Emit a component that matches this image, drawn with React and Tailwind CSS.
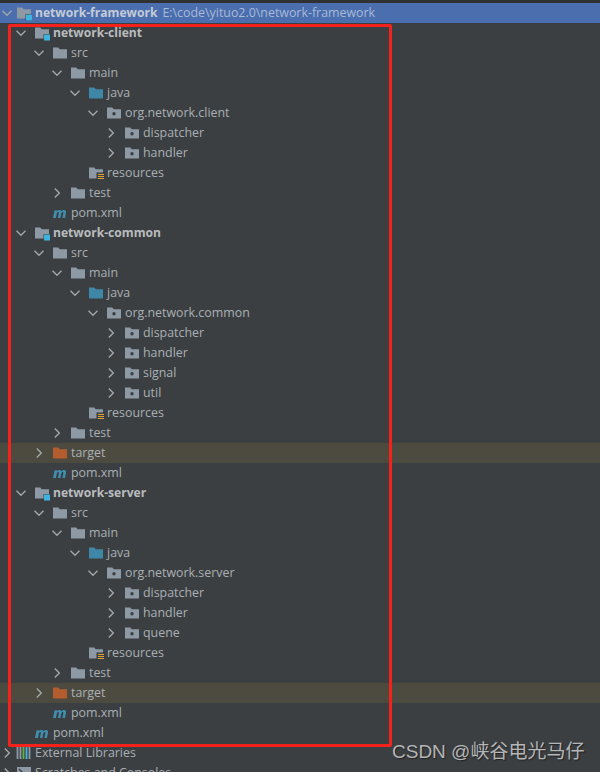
const INDENT = {
  0: 'pl-[1px]',
  1: 'pl-[15px]',
  2: 'pl-[33px]',
  3: 'pl-[51px]',
  4: 'pl-[69px]',
  5: 'pl-[87px]',
  6: 'pl-[105px]',
}

const FOLDER = 'M1 2.5h5.2l1.5 1.7H15v9.3H1z'

function Chevron({ dir, tight }) {
  const gap = tight ? 'mr-[3px]' : 'mr-[7px]'
  if (!dir) return <span className={`w-[12px] shrink-0 ${gap}`} />
  return (
    <svg width="12" height="12" viewBox="0 0 12 12" className={`shrink-0 text-[#a3a7aa] ${gap}`} fill="none" stroke="currentColor" strokeWidth="1.4">
      {dir === 'down' ? <path d="M1.5 3.8 6 8.3l4.5-4.5" /> : <path d="M3.8 1.5 8.3 6l-4.5 4.5" />}
    </svg>
  )
}

function Icon({ type }) {
  if (type === 'pom') {
    return (
      <svg width="16" height="16" viewBox="0 0 16 16" className="shrink-0">
        <path d="M1 13 2.6 5.2h2.5l-.2 1c.8-.8 1.6-1.2 2.5-1.2 1 0 1.6.4 1.9 1.3.9-.9 1.800-1.300 2.800-1.300 1.500 0 2.200.9 1.900 2.500L13 13h-2.600l1-5c.1-.6-.1-.9-.6-.9-.5 0-1 .3-1.400.8L8.400 13H5.900l1-5c.1-.6-.1-.9-.6-.9-.5 0-1 .3-1.400.8L3.900 13z" fill="#3f8eae" />
      </svg>
    )
  }
  if (type === 'module') {
    return (
      <svg width="16" height="16" viewBox="0 0 16 16" className="shrink-0">
        <path d={FOLDER} fill="#8d9aa5" />
        <rect x="9.500" y="9" width="6.500" height="6.500" fill="#3c3f41" />
        <rect x="10" y="9.500" width="6" height="6" fill="#3fb3e0" />
      </svg>
    )
  }
  if (type === 'package') {
    return (
      <svg width="16" height="16" viewBox="0 0 16 16" className="shrink-0">
        <path d={FOLDER} fill="#8d9aa5" />
        <circle cx="8" cy="8.800" r="1.700" fill="#3c3f41" />
      </svg>
    )
  }
  if (type === 'resources') {
    return (
      <svg width="16" height="16" viewBox="0 0 16 16" className="shrink-0">
        <path d={FOLDER} fill="#8d9aa5" />
        <rect x="8.500" y="7.500" width="7.500" height="8.500" fill="#3c3f41" />
        <path d="M10 9.500h6M10 11.500h6M10 13.500h6" stroke="#e3a33a" strokeWidth="1" />
      </svg>
    )
  }
  const fill = type === 'java' ? '#3f87a6' : type === 'target' ? '#b45c2e' : '#8d9aa5'
  return (
    <svg width="16" height="16" viewBox="0 0 16 16" className="shrink-0">
      <path d={FOLDER} fill={fill} />
    </svg>
  )
}

function Row({ depth = 0, dir, icon, label, bold, excluded }) {
  return (
    <div className={`flex items-center h-[20px] whitespace-nowrap ${INDENT[depth]} ${excluded ? 'bg-[#4d4a40]' : ''}`}>
      <Chevron dir={dir} />
      <Icon type={icon} />
      <span className={`ml-[3px] ${bold ? 'font-bold text-[12.1px] text-[#b9bcbe]' : ''}`}>{label}</span>
    </div>
  )
}

function Module({ name, pkg, packages, target }) {
  return (
    <>
      <Row depth={1} dir="down" icon="module" label={name} bold />
      <Row depth={2} dir="down" icon="folder" label="src" />
      <Row depth={3} dir="down" icon="folder" label="main" />
      <Row depth={4} dir="down" icon="java" label="java" />
      <Row depth={5} dir="down" icon="package" label={pkg} />
      {packages.map((p) => (
        <Row key={p} depth={6} dir="right" icon="package" label={p} />
      ))}
      <Row depth={4} icon="resources" label="resources" />
      <Row depth={3} dir="right" icon="folder" label="test" />
      {target && <Row depth={2} dir="right" icon="target" label="target" excluded />}
      <Row depth={2} icon="pom" label="pom.xml" />
    </>
  )
}

export default function App() {
  return (
    <div className="relative w-[600px] h-[772px] overflow-hidden bg-[#3c3f41] text-[#a9b0b5] text-[12.4px] font-['Open_Sans','Liberation_Sans',sans-serif]">
      <div className="h-[3px] bg-[#2f3133]" />
      <div className="flex items-center h-[20px] whitespace-nowrap pl-[1px] bg-[#4b6eaf]">
        <Chevron dir="down" tight />
        <Icon type="module" />
        <span className="ml-[3px] font-bold text-[12.1px] text-[#c4cbd6]">network-framework</span>
        <span className="ml-[5px] text-[#a9bad6]">E:\code\yituo2.0\network-framework</span>
      </div>

      <Module name="network-client" pkg="org.network.client" packages={['dispatcher', 'handler']} />
      <Module name="network-common" pkg="org.network.common" packages={['dispatcher', 'handler', 'signal', 'util']} target />
      <Module name="network-server" pkg="org.network.server" packages={['dispatcher', 'handler', 'quene']} target />
      <Row depth={1} icon="pom" label="pom.xml" />

      <div className="flex items-center h-[20px] whitespace-nowrap pl-[1px]">
        <Chevron dir="right" tight />
        <svg width="16" height="16" viewBox="0 0 16 16" className="shrink-0">
          <path d="M1.500 2v12M4.500 2v12" stroke="#8d9aa5" strokeWidth="1.800" />
          <path d="M7.500 2v12" stroke="#62b543" strokeWidth="1.800" />
          <path d="M10.500 2v12" stroke="#40b6e0" strokeWidth="1.800" />
          <path d="M13.500 2v12" stroke="#8d9aa5" strokeWidth="1.800" />
        </svg>
        <span className="ml-[3px]">External Libraries</span>
      </div>
      <div className="flex items-center h-[20px] whitespace-nowrap pl-[1px]">
        <Chevron dir="right" tight />
        <svg width="16" height="16" viewBox="0 0 16 16" className="shrink-0">
          <rect x="1" y="2" width="14" height="12" fill="#8d9aa5" />
          <path d="m3 4 3 3-3 3" stroke="#3c3f41" strokeWidth="1.400" fill="none" />
        </svg>
        <span className="ml-[3px]">Scratches and Consoles</span>
      </div>

      {/* annotation drawn over the screenshot */}
      <div className="absolute left-[8px] top-[24px] w-[384px] h-[723px] border-[3px] border-[#f5221b] rounded-[2px]" />
      <div className="absolute left-[392px] top-[740px] text-[19px] leading-[24px] whitespace-nowrap text-[#b4b6b8] [text-shadow:1px_1px_1px_#222] font-['Liberation_Sans','Noto_Sans_CJK_SC',sans-serif]">
        CSDN @峡谷电光马仔
      </div>
    </div>
  )
}
